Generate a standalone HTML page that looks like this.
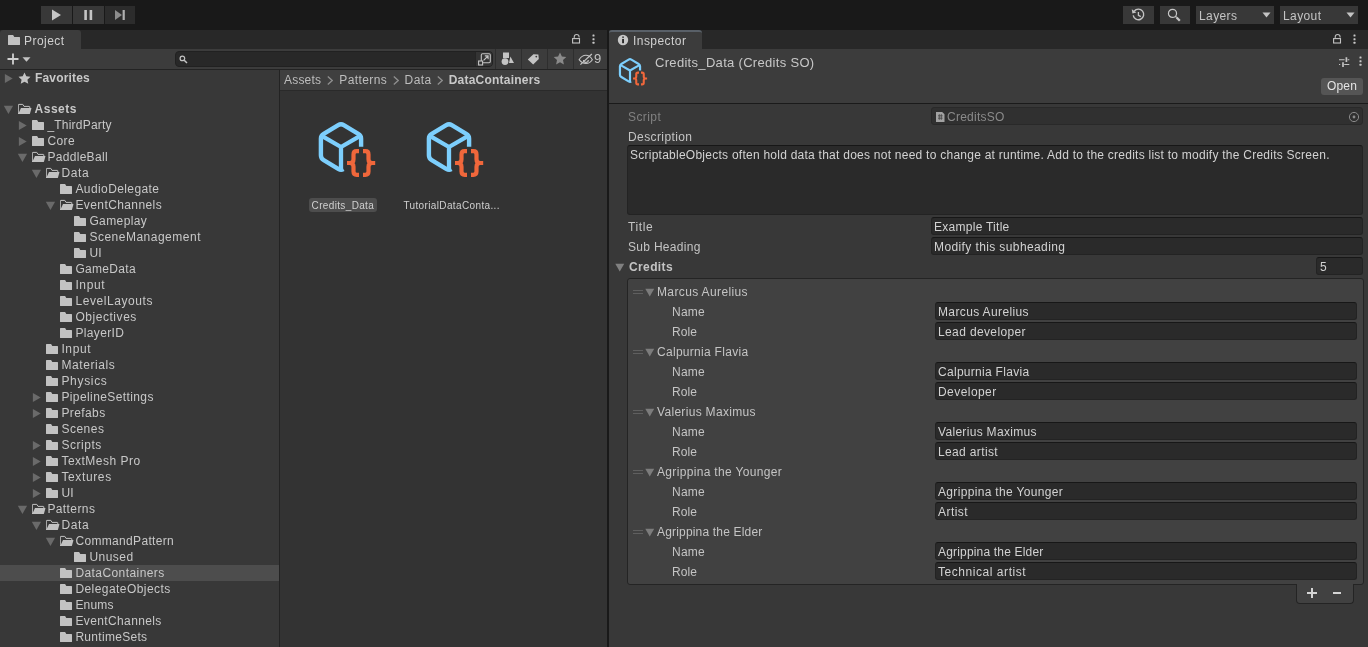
<!DOCTYPE html>
<html><head><meta charset="utf-8"><title>Unity</title>
<style>
*{box-sizing:border-box;margin:0;padding:0}
html,body{width:1368px;height:647px;overflow:hidden;background:#383838}
body{font-family:"Liberation Sans",sans-serif;font-size:12px;color:#c8c8c8;position:relative;letter-spacing:0.28px}
#wrap{position:absolute;left:0;top:0;width:1368px;height:647px;will-change:transform;transform:translateZ(0)}
.abs{position:absolute}
#top{position:absolute;left:0;top:0;width:1368px;height:30px;background:#191919}
.tb{position:absolute;top:6px;height:18px;background:#383838}
#ptabs{position:absolute;left:0;top:30px;width:607px;height:19px;background:#282828}
#itabs{position:absolute;left:609px;top:30px;width:759px;height:19px;background:#282828}
#vsplit{position:absolute;left:607px;top:30px;width:2px;height:617px;background:#191919}
.tab{position:absolute;top:0;height:19px;background:#3c3c3c;border-radius:3px 3px 0 0}
.tab span{position:absolute;top:3px;font-size:12px;color:#d0d0d0;white-space:nowrap}
#ptool{position:absolute;left:0;top:49px;width:607px;height:20px;background:#3c3c3c}
#pline{position:absolute;left:0;top:69px;width:607px;height:1px;background:#232323}
#ptree{position:absolute;left:0;top:70px;width:279px;height:577px;background:#383838;overflow:hidden}
#psplit{position:absolute;left:279px;top:70px;width:1px;height:577px;background:#232323}
#pright{position:absolute;left:280px;top:70px;width:327px;height:577px;background:#333333}
#crumb{position:absolute;left:0;top:0;width:327px;height:21px;background:#3f3f3f;border-bottom:1px solid #2a2a2a}
#crumb span{position:absolute;top:3.4px;white-space:nowrap;color:#bdbdbd}
.row{position:absolute;left:0;width:279px;height:16px}
.row.sel{background:#4d4d4d}
.row svg{position:absolute;top:0}
.tl{position:absolute;top:1px;white-space:nowrap;color:#c8c8c8;line-height:14px}
.b{font-weight:bold;letter-spacing:0.05px}
#insp{position:absolute;left:609px;top:49px;width:759px;height:598px;background:#383838}
#ihead{position:absolute;left:609px;top:49px;width:759px;height:54px;background:#3c3c3c}
#iline{position:absolute;left:609px;top:103px;width:759px;height:1px;background:#1a1a1a}
.lbl{position:absolute;white-space:nowrap;line-height:20px;color:#c4c4c4}
.fld{position:absolute;height:18px;background:#2a2a2a;border:1px solid #232323;border-top-color:#171717;border-radius:3px;margin-top:-1px}
.fld span{position:absolute;left:2px;top:2px;line-height:14px;white-space:nowrap;color:#d2d2d2}
</style></head><body><div id="wrap">
<svg width="0" height="0" style="position:absolute">
<defs>
<g id="fclosed"><path d="M0 3.6a.6.6 0 0 1 .6-.6h4.5l1.2 2h5.1a.6.6 0 0 1 .6.6v6.8a.6.6 0 0 1-.6.6h-10.8a.6.6 0 0 1-.6-.6z" fill="#c2c2c2"/></g>
<g id="fopen"><path d="M0.3 12.5V3.9a.5.5 0 0 1 .5-.5h4l1.2 2h5.3a.5.5 0 0 1 .5.5v1.4" fill="none" stroke="#c2c2c2" stroke-width="1"/><path d="M3 7.1h10.1a.3.3 0 0 1 .3.4l-1.4 4.9a.7.7 0 0 1-.7.5H-0.2v-0.8h0.9z" fill="#c2c2c2"/></g>
</defs></svg>

<!-- top toolbar -->
<div id="top">
 <div class="tb" style="left:41px;width:31px"><svg class="abs" style="left:0;top:0" width="31" height="18"><path d="M11 3.5v11l9-5.5z" fill="#c4c4c4"/></svg></div>
 <div class="tb" style="left:73px;width:31px"><svg class="abs" style="left:0;top:0" width="31" height="18"><path d="M11.3 4h2.6v10h-2.6zM16.6 4h2.6v10h-2.6z" fill="#c4c4c4"/></svg></div>
 <div class="tb" style="left:105px;width:30px;background:#2c2c2c"><svg class="abs" style="left:0;top:0" width="30" height="18"><path d="M10 4v10l7-5z" fill="#8c8c8c"/><path d="M17.6 4h2.2v10h-2.2z" fill="#b0b0b0"/></svg></div>

 <div class="tb" style="left:1123px;width:31px"><svg class="abs" style="left:8px;top:2px" width="15" height="14" viewBox="0 0 15 14"><path d="M3.2 3.2A5.3 5.3 0 1 1 2.2 7.4" fill="none" stroke="#c4c4c4" stroke-width="1.4"/><path d="M0.8 1.2l0.6 4.2 4-1z" fill="#c4c4c4"/><path d="M7.4 4v3.4l2.4 1.2" fill="none" stroke="#c4c4c4" stroke-width="1.3"/></svg></div>
 <div class="tb" style="left:1160px;width:30px"><svg class="abs" style="left:7px;top:2px" width="15" height="14" viewBox="0 0 15 14"><circle cx="5.5" cy="5.4" r="4.05" fill="none" stroke="#c8c8c8" stroke-width="1.2"/><path d="M8.4 8.3l1.2 1.2" stroke="#c8c8c8" stroke-width="1.3"/><path d="M9.6 9.5l3.2 3.2" stroke="#c8c8c8" stroke-width="2.3"/></svg></div>
 <div class="tb" style="left:1196px;width:78px"><span class="abs" style="left:3px;top:2.5px;line-height:14px;color:#c4c4c4;letter-spacing:0.4px">Layers</span><svg class="abs" style="left:66px;top:6px" width="9" height="6"><path d="M0.5 0.5h8l-4 5z" fill="#c4c4c4"/></svg></div>
 <div class="tb" style="left:1280px;width:78px"><span class="abs" style="left:3px;top:2.5px;line-height:14px;color:#c4c4c4;letter-spacing:0.4px">Layout</span><svg class="abs" style="left:66px;top:6px" width="9" height="6"><path d="M0.5 0.5h8l-4 5z" fill="#c4c4c4"/></svg></div>
</div>

<!-- project tabs -->
<div id="ptabs">
 <div class="tab" style="left:0;width:81px">
  <svg class="abs" style="left:8px;top:2px" width="15" height="16" viewBox="0 0 15 16"><path d="M0 3.6a.6.6 0 0 1 .6-.6h4.5l1.2 2h5.1a.6.6 0 0 1 .6.6v6.8a.6.6 0 0 1-.6.6h-10.8a.6.6 0 0 1-.6-.6z" fill="#c2c2c2"/></svg>
  <span style="left:24px;top:4px;line-height:14px;letter-spacing:0.45px">Project</span>
 </div>
 <!-- lock + kebab -->
 <svg class="abs" style="left:571.8px;top:3.3px" width="11" height="13" viewBox="0 0 11 13"><path d="M2.2 5.4V3.9a2.45 2.45 0 0 1 4.9 0V4.4" fill="none" stroke="#c0c0c0" stroke-width="1.05"/><rect x="0.6" y="5.6" width="6.9" height="4.4" fill="none" stroke="#c4c4c4" stroke-width="1.1"/></svg>
 <svg class="abs" style="left:592px;top:4px" width="3" height="12"><rect x="0.5" y="0.6" width="2" height="2" rx="0.5" fill="#c8c8c8"/><rect x="0.5" y="4.2" width="2" height="2" rx="0.5" fill="#c8c8c8"/><rect x="0.5" y="7.8" width="2" height="2" rx="0.5" fill="#c8c8c8"/></svg>
</div>

<!-- project toolbar -->
<div id="ptool">
 <svg class="abs" style="left:7px;top:4px" width="12" height="12"><path d="M6 0.5v11M0.5 6h11" stroke="#d0d0d0" stroke-width="1.8"/></svg>
 <svg class="abs" style="left:22px;top:8px" width="9" height="5"><path d="M0.5 0.3h8l-4 4.5z" fill="#c4c4c4"/></svg>
 <div class="abs" style="left:175px;top:2px;width:318px;height:16px;background:#282828;border:1px solid #212121;border-radius:4px;overflow:hidden"><div class="abs" style="left:299px;top:0;width:18px;height:14px;background:#343434;border-left:1px solid #252525"></div></div>
 <svg class="abs" style="left:179px;top:6px" width="9" height="9" viewBox="0 0 9 9"><circle cx="3.4" cy="3.4" r="2.3" fill="none" stroke="#c4c4c4" stroke-width="1.2"/><path d="M5.2 5.2l2.8 2.8" stroke="#c4c4c4" stroke-width="1.5"/></svg>
 <!-- open-in-new icon in search -->
 <svg class="abs" style="left:477.5px;top:3.5px" width="14" height="13" viewBox="0 0 14 13"><rect x="3.3" y="0.8" width="9" height="9" rx="1.2" fill="none" stroke="#c4c4c4" stroke-width="1.1"/><rect x="0.6" y="8" width="4" height="4" fill="#343434" stroke="#c4c4c4" stroke-width="1.1"/><path d="M5.6 7.4L10 3M6.8 2.9h3.3v3.3" fill="none" stroke="#c4c4c4" stroke-width="1.1"/></svg>
 <div class="abs" style="left:495px;top:0;width:1px;height:20px;background:#2e2e2e"></div>
 <div class="abs" style="left:521px;top:0;width:1px;height:20px;background:#2e2e2e"></div>
 <div class="abs" style="left:547px;top:0;width:1px;height:20px;background:#2e2e2e"></div>
 <div class="abs" style="left:573px;top:0;width:1px;height:20px;background:#2e2e2e"></div>
 <!-- type filter icon -->
 <svg class="abs" style="left:501px;top:3px" width="14" height="14" viewBox="0 0 14 14"><rect x="2" y="0.5" width="6" height="5.5" fill="#c4c4c4"/><circle cx="4" cy="9.6" r="3.4" fill="#c4c4c4"/><path d="M9.4 4.5l3.6 6.5h-5z" fill="#c4c4c4"/></svg>
 <!-- label icon -->
 <svg class="abs" style="left:527px;top:4px" width="13" height="12" viewBox="0 0 13 12"><path d="M0.8 6.6L6.4 1.2l5 0.2 0.4 4.6-5.6 5.4z" fill="#c4c4c4"/><circle cx="9.3" cy="3.6" r="0.9" fill="#3c3c3c"/></svg>
 <!-- star -->
 <svg class="abs" style="left:553px;top:3px" width="14" height="13" viewBox="0 0 14 13"><path d="M7 0.6l1.9 4 4.4 0.5-3.3 3 0.9 4.3L7 10.2l-3.9 2.2 0.9-4.3-3.3-3 4.4-0.5z" fill="#8a8a8a"/></svg>
 <!-- hidden eye -->
 <svg class="abs" style="left:578px;top:3.5px" width="17.5" height="13" viewBox="0 0 19 14"><path d="M1.2 7.2C3.5 3.4 6 2.4 8.6 2.4s5 1.2 7 4.8c-2 3-4.4 4.2-7 4.2S3.4 10.2 1.2 7.2z" fill="none" stroke="#c4c4c4" stroke-width="1.2"/><path d="M6 7.5a2.6 2.6 0 0 0 5.2 0" fill="none" stroke="#c4c4c4" stroke-width="1.2"/><path d="M2.6 12.6L15 1" stroke="#c4c4c4" stroke-width="1.3"/></svg>
 <span class="abs" style="left:594px;top:3px;line-height:14px;font-size:13px;color:#c4c4c4">9</span>
</div>
<div id="pline"></div>

<!-- tree -->
<div id="ptree"></div>
<div class="row" style="top:70px">
 <svg class="ar" style="left:5px;overflow:visible" width="10" height="16" viewBox="0 0 10 16"><path d="M-0.1 3.9v9.1l7.8-4.55z" fill="#6a6a6a"/></svg>
 <svg style="left:18px;top:2px" width="13" height="12" viewBox="0 0 13 12"><path d="M6.5 0.4l1.8 3.9 4.2 0.5-3.1 2.9 0.9 4.1-3.8-2.1-3.8 2.1 0.9-4.1-3.1-2.9 4.2-0.5z" fill="#c4c4c4"/></svg>
 <span class="tl b" style="letter-spacing:0.17px;left:35px">Favorites</span>
</div>
<div class="row" style="top:101px"><svg class="ar" style="left:4px;overflow:visible" width="10" height="16" viewBox="0 0 10 16"><path d="M-0.2 4.8h9.3L4.45 12.9z" fill="#6a6a6a"/></svg><svg class="fo" style="left:18px" width="15" height="16" viewBox="0 0 15 16"><path d="M0.3 12.5V3.9a.5.5 0 0 1 .5-.5h4l1.2 2h5.3a.5.5 0 0 1 .5.5v1.4" fill="none" stroke="#c2c2c2" stroke-width="1"/><path d="M3 7.1h10.1a.3.3 0 0 1 .3.4l-1.4 4.9a.7.7 0 0 1-.7.5H-0.2v-0.8h0.9z" fill="#c2c2c2"/></svg><span class="tl b" style="letter-spacing:0.49px;left:34.6px">Assets</span></div>
<div class="row" style="top:117px"><svg class="ar" style="left:19px;overflow:visible" width="10" height="16" viewBox="0 0 10 16"><path d="M-0.1 3.9v9.1l7.8-4.55z" fill="#6a6a6a"/></svg><svg class="fo" style="left:32px" width="15" height="16" viewBox="0 0 15 16"><path d="M0 3.6a.6.6 0 0 1 .6-.6h4.5l1.2 2h5.1a.6.6 0 0 1 .6.6v6.8a.6.6 0 0 1-.6.6h-10.8a.6.6 0 0 1-.6-.6z" fill="#c2c2c2"/></svg><span class="tl" style="letter-spacing:0.21px;left:47.4px">_ThirdParty</span></div>
<div class="row" style="top:133px"><svg class="ar" style="left:19px;overflow:visible" width="10" height="16" viewBox="0 0 10 16"><path d="M-0.1 3.9v9.1l7.8-4.55z" fill="#6a6a6a"/></svg><svg class="fo" style="left:32px" width="15" height="16" viewBox="0 0 15 16"><path d="M0 3.6a.6.6 0 0 1 .6-.6h4.5l1.2 2h5.1a.6.6 0 0 1 .6.6v6.8a.6.6 0 0 1-.6.6h-10.8a.6.6 0 0 1-.6-.6z" fill="#c2c2c2"/></svg><span class="tl" style="letter-spacing:0.43px;left:47.4px">Core</span></div>
<div class="row" style="top:149px"><svg class="ar" style="left:18px;overflow:visible" width="10" height="16" viewBox="0 0 10 16"><path d="M-0.2 4.8h9.3L4.45 12.9z" fill="#6a6a6a"/></svg><svg class="fo" style="left:32px" width="15" height="16" viewBox="0 0 15 16"><path d="M0.3 12.5V3.9a.5.5 0 0 1 .5-.5h4l1.2 2h5.3a.5.5 0 0 1 .5.5v1.4" fill="none" stroke="#c2c2c2" stroke-width="1"/><path d="M3 7.1h10.1a.3.3 0 0 1 .3.4l-1.4 4.9a.7.7 0 0 1-.7.5H-0.2v-0.8h0.9z" fill="#c2c2c2"/></svg><span class="tl" style="letter-spacing:0.31px;left:47.4px">PaddleBall</span></div>
<div class="row" style="top:165px"><svg class="ar" style="left:32px;overflow:visible" width="10" height="16" viewBox="0 0 10 16"><path d="M-0.2 4.8h9.3L4.45 12.9z" fill="#6a6a6a"/></svg><svg class="fo" style="left:46px" width="15" height="16" viewBox="0 0 15 16"><path d="M0.3 12.5V3.9a.5.5 0 0 1 .5-.5h4l1.2 2h5.3a.5.5 0 0 1 .5.5v1.4" fill="none" stroke="#c2c2c2" stroke-width="1"/><path d="M3 7.1h10.1a.3.3 0 0 1 .3.4l-1.4 4.9a.7.7 0 0 1-.7.5H-0.2v-0.8h0.9z" fill="#c2c2c2"/></svg><span class="tl" style="letter-spacing:0.65px;left:61.4px">Data</span></div>
<div class="row" style="top:181px"><svg class="fo" style="left:60px" width="15" height="16" viewBox="0 0 15 16"><path d="M0 3.6a.6.6 0 0 1 .6-.6h4.5l1.2 2h5.1a.6.6 0 0 1 .6.6v6.8a.6.6 0 0 1-.6.6h-10.8a.6.6 0 0 1-.6-.6z" fill="#c2c2c2"/></svg><span class="tl" style="letter-spacing:0.41px;left:75.39999999999999px">AudioDelegate</span></div>
<div class="row" style="top:197px"><svg class="ar" style="left:46px;overflow:visible" width="10" height="16" viewBox="0 0 10 16"><path d="M-0.2 4.8h9.3L4.45 12.9z" fill="#6a6a6a"/></svg><svg class="fo" style="left:60px" width="15" height="16" viewBox="0 0 15 16"><path d="M0.3 12.5V3.9a.5.5 0 0 1 .5-.5h4l1.2 2h5.3a.5.5 0 0 1 .5.5v1.4" fill="none" stroke="#c2c2c2" stroke-width="1"/><path d="M3 7.1h10.1a.3.3 0 0 1 .3.4l-1.4 4.9a.7.7 0 0 1-.7.5H-0.2v-0.8h0.9z" fill="#c2c2c2"/></svg><span class="tl" style="letter-spacing:0.41px;left:75.39999999999999px">EventChannels</span></div>
<div class="row" style="top:213px"><svg class="fo" style="left:74px" width="15" height="16" viewBox="0 0 15 16"><path d="M0 3.6a.6.6 0 0 1 .6-.6h4.5l1.2 2h5.1a.6.6 0 0 1 .6.6v6.8a.6.6 0 0 1-.6.6h-10.8a.6.6 0 0 1-.6-.6z" fill="#c2c2c2"/></svg><span class="tl" style="letter-spacing:0.39px;left:89.39999999999999px">Gameplay</span></div>
<div class="row" style="top:229px"><svg class="fo" style="left:74px" width="15" height="16" viewBox="0 0 15 16"><path d="M0 3.6a.6.6 0 0 1 .6-.6h4.5l1.2 2h5.1a.6.6 0 0 1 .6.6v6.8a.6.6 0 0 1-.6.6h-10.8a.6.6 0 0 1-.6-.6z" fill="#c2c2c2"/></svg><span class="tl" style="letter-spacing:0.5px;left:89.39999999999999px">SceneManagement</span></div>
<div class="row" style="top:245px"><svg class="fo" style="left:74px" width="15" height="16" viewBox="0 0 15 16"><path d="M0 3.6a.6.6 0 0 1 .6-.6h4.5l1.2 2h5.1a.6.6 0 0 1 .6.6v6.8a.6.6 0 0 1-.6.6h-10.8a.6.6 0 0 1-.6-.6z" fill="#c2c2c2"/></svg><span class="tl" style="letter-spacing:0.3px;left:89.39999999999999px">UI</span></div>
<div class="row" style="top:261px"><svg class="fo" style="left:60px" width="15" height="16" viewBox="0 0 15 16"><path d="M0 3.6a.6.6 0 0 1 .6-.6h4.5l1.2 2h5.1a.6.6 0 0 1 .6.6v6.8a.6.6 0 0 1-.6.6h-10.8a.6.6 0 0 1-.6-.6z" fill="#c2c2c2"/></svg><span class="tl" style="letter-spacing:0.32px;left:75.39999999999999px">GameData</span></div>
<div class="row" style="top:277px"><svg class="fo" style="left:60px" width="15" height="16" viewBox="0 0 15 16"><path d="M0 3.6a.6.6 0 0 1 .6-.6h4.5l1.2 2h5.1a.6.6 0 0 1 .6.6v6.8a.6.6 0 0 1-.6.6h-10.8a.6.6 0 0 1-.6-.6z" fill="#c2c2c2"/></svg><span class="tl" style="letter-spacing:0.62px;left:75.39999999999999px">Input</span></div>
<div class="row" style="top:293px"><svg class="fo" style="left:60px" width="15" height="16" viewBox="0 0 15 16"><path d="M0 3.6a.6.6 0 0 1 .6-.6h4.5l1.2 2h5.1a.6.6 0 0 1 .6.6v6.8a.6.6 0 0 1-.6.6h-10.8a.6.6 0 0 1-.6-.6z" fill="#c2c2c2"/></svg><span class="tl" style="letter-spacing:0.57px;left:75.39999999999999px">LevelLayouts</span></div>
<div class="row" style="top:309px"><svg class="fo" style="left:60px" width="15" height="16" viewBox="0 0 15 16"><path d="M0 3.6a.6.6 0 0 1 .6-.6h4.5l1.2 2h5.1a.6.6 0 0 1 .6.6v6.8a.6.6 0 0 1-.6.6h-10.8a.6.6 0 0 1-.6-.6z" fill="#c2c2c2"/></svg><span class="tl" style="letter-spacing:0.55px;left:75.39999999999999px">Objectives</span></div>
<div class="row" style="top:325px"><svg class="fo" style="left:60px" width="15" height="16" viewBox="0 0 15 16"><path d="M0 3.6a.6.6 0 0 1 .6-.6h4.5l1.2 2h5.1a.6.6 0 0 1 .6.6v6.8a.6.6 0 0 1-.6.6h-10.8a.6.6 0 0 1-.6-.6z" fill="#c2c2c2"/></svg><span class="tl" style="letter-spacing:0.35px;left:75.39999999999999px">PlayerID</span></div>
<div class="row" style="top:341px"><svg class="fo" style="left:46px" width="15" height="16" viewBox="0 0 15 16"><path d="M0 3.6a.6.6 0 0 1 .6-.6h4.5l1.2 2h5.1a.6.6 0 0 1 .6.6v6.8a.6.6 0 0 1-.6.6h-10.8a.6.6 0 0 1-.6-.6z" fill="#c2c2c2"/></svg><span class="tl" style="letter-spacing:0.62px;left:61.4px">Input</span></div>
<div class="row" style="top:357px"><svg class="fo" style="left:46px" width="15" height="16" viewBox="0 0 15 16"><path d="M0 3.6a.6.6 0 0 1 .6-.6h4.5l1.2 2h5.1a.6.6 0 0 1 .6.6v6.8a.6.6 0 0 1-.6.6h-10.8a.6.6 0 0 1-.6-.6z" fill="#c2c2c2"/></svg><span class="tl" style="letter-spacing:0.58px;left:61.4px">Materials</span></div>
<div class="row" style="top:373px"><svg class="fo" style="left:46px" width="15" height="16" viewBox="0 0 15 16"><path d="M0 3.6a.6.6 0 0 1 .6-.6h4.5l1.2 2h5.1a.6.6 0 0 1 .6.6v6.8a.6.6 0 0 1-.6.6h-10.8a.6.6 0 0 1-.6-.6z" fill="#c2c2c2"/></svg><span class="tl" style="letter-spacing:0.69px;left:61.4px">Physics</span></div>
<div class="row" style="top:389px"><svg class="ar" style="left:33px;overflow:visible" width="10" height="16" viewBox="0 0 10 16"><path d="M-0.1 3.9v9.1l7.8-4.55z" fill="#6a6a6a"/></svg><svg class="fo" style="left:46px" width="15" height="16" viewBox="0 0 15 16"><path d="M0 3.6a.6.6 0 0 1 .6-.6h4.5l1.2 2h5.1a.6.6 0 0 1 .6.6v6.8a.6.6 0 0 1-.6.6h-10.8a.6.6 0 0 1-.6-.6z" fill="#c2c2c2"/></svg><span class="tl" style="letter-spacing:0.4px;left:61.4px">PipelineSettings</span></div>
<div class="row" style="top:405px"><svg class="ar" style="left:33px;overflow:visible" width="10" height="16" viewBox="0 0 10 16"><path d="M-0.1 3.9v9.1l7.8-4.55z" fill="#6a6a6a"/></svg><svg class="fo" style="left:46px" width="15" height="16" viewBox="0 0 15 16"><path d="M0 3.6a.6.6 0 0 1 .6-.6h4.5l1.2 2h5.1a.6.6 0 0 1 .6.6v6.8a.6.6 0 0 1-.6.6h-10.8a.6.6 0 0 1-.6-.6z" fill="#c2c2c2"/></svg><span class="tl" style="letter-spacing:0.41px;left:61.4px">Prefabs</span></div>
<div class="row" style="top:421px"><svg class="fo" style="left:46px" width="15" height="16" viewBox="0 0 15 16"><path d="M0 3.6a.6.6 0 0 1 .6-.6h4.5l1.2 2h5.1a.6.6 0 0 1 .6.6v6.8a.6.6 0 0 1-.6.6h-10.8a.6.6 0 0 1-.6-.6z" fill="#c2c2c2"/></svg><span class="tl" style="letter-spacing:0.51px;left:61.4px">Scenes</span></div>
<div class="row" style="top:437px"><svg class="ar" style="left:33px;overflow:visible" width="10" height="16" viewBox="0 0 10 16"><path d="M-0.1 3.9v9.1l7.8-4.55z" fill="#6a6a6a"/></svg><svg class="fo" style="left:46px" width="15" height="16" viewBox="0 0 15 16"><path d="M0 3.6a.6.6 0 0 1 .6-.6h4.5l1.2 2h5.1a.6.6 0 0 1 .6.6v6.8a.6.6 0 0 1-.6.6h-10.8a.6.6 0 0 1-.6-.6z" fill="#c2c2c2"/></svg><span class="tl" style="letter-spacing:0.54px;left:61.4px">Scripts</span></div>
<div class="row" style="top:453px"><svg class="ar" style="left:33px;overflow:visible" width="10" height="16" viewBox="0 0 10 16"><path d="M-0.1 3.9v9.1l7.8-4.55z" fill="#6a6a6a"/></svg><svg class="fo" style="left:46px" width="15" height="16" viewBox="0 0 15 16"><path d="M0 3.6a.6.6 0 0 1 .6-.6h4.5l1.2 2h5.1a.6.6 0 0 1 .6.6v6.8a.6.6 0 0 1-.6.6h-10.8a.6.6 0 0 1-.6-.6z" fill="#c2c2c2"/></svg><span class="tl" style="letter-spacing:0.49px;left:61.4px">TextMesh Pro</span></div>
<div class="row" style="top:469px"><svg class="ar" style="left:33px;overflow:visible" width="10" height="16" viewBox="0 0 10 16"><path d="M-0.1 3.9v9.1l7.8-4.55z" fill="#6a6a6a"/></svg><svg class="fo" style="left:46px" width="15" height="16" viewBox="0 0 15 16"><path d="M0 3.6a.6.6 0 0 1 .6-.6h4.5l1.2 2h5.1a.6.6 0 0 1 .6.6v6.8a.6.6 0 0 1-.6.6h-10.8a.6.6 0 0 1-.6-.6z" fill="#c2c2c2"/></svg><span class="tl" style="letter-spacing:0.63px;left:61.4px">Textures</span></div>
<div class="row" style="top:485px"><svg class="ar" style="left:33px;overflow:visible" width="10" height="16" viewBox="0 0 10 16"><path d="M-0.1 3.9v9.1l7.8-4.55z" fill="#6a6a6a"/></svg><svg class="fo" style="left:46px" width="15" height="16" viewBox="0 0 15 16"><path d="M0 3.6a.6.6 0 0 1 .6-.6h4.5l1.2 2h5.1a.6.6 0 0 1 .6.6v6.8a.6.6 0 0 1-.6.6h-10.8a.6.6 0 0 1-.6-.6z" fill="#c2c2c2"/></svg><span class="tl" style="letter-spacing:0.3px;left:61.4px">UI</span></div>
<div class="row" style="top:501px"><svg class="ar" style="left:18px;overflow:visible" width="10" height="16" viewBox="0 0 10 16"><path d="M-0.2 4.8h9.3L4.45 12.9z" fill="#6a6a6a"/></svg><svg class="fo" style="left:32px" width="15" height="16" viewBox="0 0 15 16"><path d="M0.3 12.5V3.9a.5.5 0 0 1 .5-.5h4l1.2 2h5.3a.5.5 0 0 1 .5.5v1.4" fill="none" stroke="#c2c2c2" stroke-width="1"/><path d="M3 7.1h10.1a.3.3 0 0 1 .3.4l-1.4 4.9a.7.7 0 0 1-.7.5H-0.2v-0.8h0.9z" fill="#c2c2c2"/></svg><span class="tl" style="letter-spacing:0.4px;left:47.4px">Patterns</span></div>
<div class="row" style="top:517px"><svg class="ar" style="left:32px;overflow:visible" width="10" height="16" viewBox="0 0 10 16"><path d="M-0.2 4.8h9.3L4.45 12.9z" fill="#6a6a6a"/></svg><svg class="fo" style="left:46px" width="15" height="16" viewBox="0 0 15 16"><path d="M0.3 12.5V3.9a.5.5 0 0 1 .5-.5h4l1.2 2h5.3a.5.5 0 0 1 .5.5v1.4" fill="none" stroke="#c2c2c2" stroke-width="1"/><path d="M3 7.1h10.1a.3.3 0 0 1 .3.4l-1.4 4.9a.7.7 0 0 1-.7.5H-0.2v-0.8h0.9z" fill="#c2c2c2"/></svg><span class="tl" style="letter-spacing:0.65px;left:61.4px">Data</span></div>
<div class="row" style="top:533px"><svg class="ar" style="left:46px;overflow:visible" width="10" height="16" viewBox="0 0 10 16"><path d="M-0.2 4.8h9.3L4.45 12.9z" fill="#6a6a6a"/></svg><svg class="fo" style="left:60px" width="15" height="16" viewBox="0 0 15 16"><path d="M0.3 12.5V3.9a.5.5 0 0 1 .5-.5h4l1.2 2h5.3a.5.5 0 0 1 .5.5v1.4" fill="none" stroke="#c2c2c2" stroke-width="1"/><path d="M3 7.1h10.1a.3.3 0 0 1 .3.4l-1.4 4.9a.7.7 0 0 1-.7.5H-0.2v-0.8h0.9z" fill="#c2c2c2"/></svg><span class="tl" style="letter-spacing:0.33px;left:75.39999999999999px">CommandPattern</span></div>
<div class="row" style="top:549px"><svg class="fo" style="left:74px" width="15" height="16" viewBox="0 0 15 16"><path d="M0 3.6a.6.6 0 0 1 .6-.6h4.5l1.2 2h5.1a.6.6 0 0 1 .6.6v6.8a.6.6 0 0 1-.6.6h-10.8a.6.6 0 0 1-.6-.6z" fill="#c2c2c2"/></svg><span class="tl" style="letter-spacing:0.47px;left:89.39999999999999px">Unused</span></div>
<div class="row sel" style="top:565px"><svg class="fo" style="left:60px" width="15" height="16" viewBox="0 0 15 16"><path d="M0 3.6a.6.6 0 0 1 .6-.6h4.5l1.2 2h5.1a.6.6 0 0 1 .6.6v6.8a.6.6 0 0 1-.6.6h-10.8a.6.6 0 0 1-.6-.6z" fill="#c2c2c2"/></svg><span class="tl" style="letter-spacing:0.42px;left:75.39999999999999px">DataContainers</span></div>
<div class="row" style="top:581px"><svg class="fo" style="left:60px" width="15" height="16" viewBox="0 0 15 16"><path d="M0 3.6a.6.6 0 0 1 .6-.6h4.5l1.2 2h5.1a.6.6 0 0 1 .6.6v6.8a.6.6 0 0 1-.6.6h-10.8a.6.6 0 0 1-.6-.6z" fill="#c2c2c2"/></svg><span class="tl" style="letter-spacing:0.44px;left:75.39999999999999px">DelegateObjects</span></div>
<div class="row" style="top:597px"><svg class="fo" style="left:60px" width="15" height="16" viewBox="0 0 15 16"><path d="M0 3.6a.6.6 0 0 1 .6-.6h4.5l1.2 2h5.1a.6.6 0 0 1 .6.6v6.8a.6.6 0 0 1-.6.6h-10.8a.6.6 0 0 1-.6-.6z" fill="#c2c2c2"/></svg><span class="tl" style="letter-spacing:0.19px;left:75.39999999999999px">Enums</span></div>
<div class="row" style="top:613px"><svg class="fo" style="left:60px" width="15" height="16" viewBox="0 0 15 16"><path d="M0 3.6a.6.6 0 0 1 .6-.6h4.5l1.2 2h5.1a.6.6 0 0 1 .6.6v6.8a.6.6 0 0 1-.6.6h-10.8a.6.6 0 0 1-.6-.6z" fill="#c2c2c2"/></svg><span class="tl" style="letter-spacing:0.38px;left:75.39999999999999px">EventChannels</span></div>
<div class="row" style="top:629px"><svg class="fo" style="left:60px" width="15" height="16" viewBox="0 0 15 16"><path d="M0 3.6a.6.6 0 0 1 .6-.6h4.5l1.2 2h5.1a.6.6 0 0 1 .6.6v6.8a.6.6 0 0 1-.6.6h-10.8a.6.6 0 0 1-.6-.6z" fill="#c2c2c2"/></svg><span class="tl" style="letter-spacing:0.3px;left:75.39999999999999px">RuntimeSets</span></div>
<div id="psplit"></div>

<!-- right project pane -->
<div id="pright">
 <div id="crumb">
  <span style="letter-spacing:0.2px;left:4px">Assets</span>
  <svg class="abs" style="left:47px;top:6px" width="6" height="9"><path d="M0.8 0.6l4.4 3.9-4.4 3.9" fill="none" stroke="#8e8e8e" stroke-width="1.35"/></svg>
  <span style="letter-spacing:0.4px;left:59.3px">Patterns</span>
  <svg class="abs" style="left:112.5px;top:6px" width="6" height="9"><path d="M0.8 0.6l4.4 3.9-4.4 3.9" fill="none" stroke="#8e8e8e" stroke-width="1.35"/></svg>
  <span style="letter-spacing:0.48px;left:124.5px">Data</span>
  <svg class="abs" style="left:157px;top:6px" width="6" height="9"><path d="M0.8 0.6l4.4 3.9-4.4 3.9" fill="none" stroke="#8e8e8e" stroke-width="1.35"/></svg>
  <span style="letter-spacing:0.22px;left:168.7px;font-weight:bold;color:#c8c8c8">DataContainers</span>
 </div>
 <!-- icons -->
 <svg class="abs" style="left:31px;top:46px;overflow:visible" width="64" height="64" viewBox="0 0 64 64"><path d="M50.1 30.8V22.7Q50.1 19.5 47.3 17.9L32.8 9.2Q30 7.5 27.2 9.2L12.7 17.9Q9.9 19.5 9.9 22.7V39.3Q9.9 42.5 12.7 44.1L27.2 52.8Q30 54.5 32.4 53.1" fill="none" stroke="#7dcffd" stroke-width="4.4" stroke-linejoin="round" stroke-linecap="butt"/>
 <path d="M11.2 20.2L30 31L48.8 20.2M30 31V53.5" fill="none" stroke="#7dcffd" stroke-width="4.3" stroke-linejoin="round" stroke-linecap="butt"/>
 <path d="M48 35.2h-2.3q-3.2 0-3.2 3.2v4.8q0 3.8-3.6 3.8h-2.9M36 47h2.9q3.6 0 3.6 3.8v4.8q0 3.2 3.2 3.2h2.3" fill="none" stroke="#f0673b" stroke-width="4.2"/>
 <path d="M52 35.2h2.3q3.2 0 3.2 3.2v4.8q0 3.8 3.6 3.8h3.1M64.2 47h-3.1q-3.6 0-3.6 3.8v4.8q0 3.2-3.2 3.2h-2.3" fill="none" stroke="#f0673b" stroke-width="4.2"/></svg>
 <svg class="abs" style="left:139px;top:46px;overflow:visible" width="64" height="64" viewBox="0 0 64 64"><path d="M50.1 30.8V22.7Q50.1 19.5 47.3 17.9L32.8 9.2Q30 7.5 27.2 9.2L12.7 17.9Q9.9 19.5 9.9 22.7V39.3Q9.9 42.5 12.7 44.1L27.2 52.8Q30 54.5 32.4 53.1" fill="none" stroke="#7dcffd" stroke-width="4.4" stroke-linejoin="round" stroke-linecap="butt"/>
 <path d="M11.2 20.2L30 31L48.8 20.2M30 31V53.5" fill="none" stroke="#7dcffd" stroke-width="4.3" stroke-linejoin="round" stroke-linecap="butt"/>
 <path d="M48 35.2h-2.3q-3.2 0-3.2 3.2v4.8q0 3.8-3.6 3.8h-2.9M36 47h2.9q3.6 0 3.6 3.8v4.8q0 3.2 3.2 3.2h2.3" fill="none" stroke="#f0673b" stroke-width="4.2"/>
 <path d="M52 35.2h2.3q3.2 0 3.2 3.2v4.8q0 3.8 3.6 3.8h3.1M64.2 47h-3.1q-3.6 0-3.6 3.8v4.8q0 3.2-3.2 3.2h-2.3" fill="none" stroke="#f0673b" stroke-width="4.2"/></svg>
 <div class="abs" style="left:29px;top:128px;width:68px;height:14px;background:#4d4d4d;border-radius:3px"></div>
 <span class="abs" style="letter-spacing:0.35px;left:31.6px;top:128px;font-size:10px;line-height:15px;color:#d0d0d0;white-space:nowrap">Credits_Data</span>
 <span class="abs" style="letter-spacing:0.37px;left:123.4px;top:128px;font-size:10px;line-height:15px;color:#d0d0d0;white-space:nowrap">TutorialDataConta...</span>
</div>

<svg width="0" height="0" style="position:absolute"><defs>
<g id="soicon">
 <path d="M50.1 30.8V22.7Q50.1 19.5 47.3 17.9L32.8 9.2Q30 7.5 27.2 9.2L12.7 17.9Q9.9 19.5 9.9 22.7V39.3Q9.9 42.5 12.7 44.1L27.2 52.8Q30 54.5 32.4 53.1" fill="none" stroke="#7dcffd" stroke-width="4.4" stroke-linejoin="round" stroke-linecap="butt"/>
 <path d="M11.2 20.2L30 31L48.8 20.2M30 31V53.5" fill="none" stroke="#7dcffd" stroke-width="4.3" stroke-linejoin="round" stroke-linecap="butt"/>
 <path d="M48 35.2h-2.3q-3.2 0-3.2 3.2v4.8q0 3.8-3.6 3.8h-2.9M36 47h2.9q3.6 0 3.6 3.8v4.8q0 3.2 3.2 3.2h2.3" fill="none" stroke="#f0673b" stroke-width="4.2"/>
 <path d="M52 35.2h2.3q3.2 0 3.2 3.2v4.8q0 3.8 3.6 3.8h3.1M64.2 47h-3.1q-3.6 0-3.6 3.8v4.8q0 3.2-3.2 3.2h-2.3" fill="none" stroke="#f0673b" stroke-width="4.2"/>
</g></defs></svg>

<div id="vsplit"></div>

<!-- inspector -->
<div id="itabs">
 <div class="tab" style="left:0;width:93px;border-top:2px solid #596068">
  <svg class="abs" style="left:8px;top:2px" width="12" height="12" viewBox="0 0 12 12"><circle cx="6" cy="6" r="5.2" fill="#c8c8c8"/><rect x="5.1" y="5" width="1.9" height="4.2" fill="#2a2a2a"/><rect x="5.1" y="2.4" width="1.9" height="1.7" fill="#555"/></svg>
  <span style="left:24px;top:2px;line-height:14px;letter-spacing:0.45px">Inspector</span>
 </div>
 <svg class="abs" style="left:723.6px;top:3.3px" width="11" height="13" viewBox="0 0 11 13"><path d="M2.2 5.4V3.9a2.45 2.45 0 0 1 4.9 0V4.4" fill="none" stroke="#c0c0c0" stroke-width="1.05"/><rect x="0.6" y="5.6" width="6.9" height="4.4" fill="none" stroke="#c4c4c4" stroke-width="1.1"/></svg>
 <svg class="abs" style="left:743.5px;top:4px" width="3" height="12"><rect x="0.5" y="0.6" width="2" height="2" rx="0.5" fill="#c8c8c8"/><rect x="0.5" y="4.2" width="2" height="2" rx="0.5" fill="#c8c8c8"/><rect x="0.5" y="7.8" width="2" height="2" rx="0.5" fill="#c8c8c8"/></svg>
</div>
<div id="insp"></div>
<div id="ihead"></div>
<svg class="abs" style="left:615px;top:54.5px;overflow:visible" width="32" height="32" viewBox="0 0 64 64"><path d="M50.1 30.8V22.7Q50.1 19.5 47.3 17.9L32.8 9.2Q30 7.5 27.2 9.2L12.7 17.9Q9.9 19.5 9.9 22.7V39.3Q9.9 42.5 12.7 44.1L27.2 52.8Q30 54.5 32.4 53.1" fill="none" stroke="#7dcffd" stroke-width="4.4" stroke-linejoin="round" stroke-linecap="butt"/>
 <path d="M11.2 20.2L30 31L48.8 20.2M30 31V53.5" fill="none" stroke="#7dcffd" stroke-width="4.3" stroke-linejoin="round" stroke-linecap="butt"/>
 <path d="M48 35.2h-2.3q-3.2 0-3.2 3.2v4.8q0 3.8-3.6 3.8h-2.9M36 47h2.9q3.6 0 3.6 3.8v4.8q0 3.2 3.2 3.2h2.3" fill="none" stroke="#f0673b" stroke-width="4.2"/>
 <path d="M52 35.2h2.3q3.2 0 3.2 3.2v4.8q0 3.8 3.6 3.8h3.1M64.2 47h-3.1q-3.6 0-3.6 3.8v4.8q0 3.2-3.2 3.2h-2.3" fill="none" stroke="#f0673b" stroke-width="4.2"/></svg>
<span class="abs" style="letter-spacing:0.31px;left:655px;top:54.7px;font-size:13px;line-height:16px;color:#c8c8c8;white-space:nowrap">Credits_Data (Credits SO)</span>
<!-- preset + kebab -->
<svg class="abs" style="left:1339px;top:57px" width="11" height="11" viewBox="0 0 11 11"><path d="M0 2.7h5.6M8.6 2.7h1.7M0 7.5h1.2M5.2 7.5h5.1" stroke="#c4c4c4" stroke-width="1.1"/><path d="M7.4 0.2v4.8M4 5.3v4.8" stroke="#c4c4c4" stroke-width="1.7"/></svg>
<svg class="abs" style="left:1358.5px;top:56.4px" width="3" height="12"><rect x="0.5" y="0.6" width="2" height="2" rx="0.5" fill="#c8c8c8"/><rect x="0.5" y="4.2" width="2" height="2" rx="0.5" fill="#c8c8c8"/><rect x="0.5" y="7.8" width="2" height="2" rx="0.5" fill="#c8c8c8"/></svg>
<div class="abs" style="left:1321px;top:78px;width:42px;height:16.5px;background:#555555;border-radius:3px"><span class="abs" style="left:0;top:0.5px;width:42px;text-align:center;line-height:15px;color:#e4e4e4;letter-spacing:0.2px">Open</span></div>
<div id="iline"></div>

<!-- fields -->
<span class="lbl" style="letter-spacing:0.42px;left:628px;top:107px;color:#808080">Script</span>
<div class="fld" style="left:931px;top:108px;width:432px;background:#303030;border-color:#292929"><svg class="abs" style="left:4px;top:4px" width="9" height="10" viewBox="0 0 9 10"><path d="M0 0h6.2l2.3 2.3v7.7h-8.5z" fill="#a2a2a2"/><path d="M2 3.8h4.6M2 6.2h4.6M3.3 2.2v5.6M5.3 2.2v5.6" stroke="#4a4a4a" stroke-width="0.9"/></svg><span style="letter-spacing:0.24px;left:15px;color:#8a8a8a">CreditsSO</span>
<svg class="abs" style="left:416px;top:2.5px" width="12" height="12"><circle cx="6" cy="6" r="4.6" fill="none" stroke="#8a8a8a" stroke-width="1"/><circle cx="6" cy="6" r="1.4" fill="#8a8a8a"/></svg></div>
<span class="lbl" style="letter-spacing:0.4px;left:628px;top:127px">Description</span>
<div class="fld" style="left:627px;top:146px;width:736px;height:70px"><span style="letter-spacing:0.25px;top:2px">ScriptableObjects often hold data that does not need to change at runtime. Add to the credits list to modify the Credits Screen.</span></div>
<span class="lbl" style="letter-spacing:0.64px;left:628px;top:217px">Title</span>
<div class="fld" style="left:931px;top:218px;width:432px"><span style="letter-spacing:0.27px;">Example Title</span></div>
<span class="lbl" style="letter-spacing:0.3px;left:628px;top:237px">Sub Heading</span>
<div class="fld" style="left:931px;top:238px;width:432px"><span style="letter-spacing:0.39px;">Modify this subheading</span></div>
<svg class="abs" style="left:614.5px;top:259px" width="10" height="16" viewBox="0 0 10 16"><path d="M0.3 4.8h8.9L4.75 12.6z" fill="#808080"/></svg>
<span class="lbl b" style="letter-spacing:0.38px;left:629px;top:257px">Credits</span>
<div class="fld" style="left:1316px;top:258px;width:47px"><span style="left:3px">5</span></div>
<!-- list box -->
<div class="abs" style="left:627px;top:278px;width:736.5px;height:307px;background:#414141;border:1px solid #242424;border-radius:3px"></div>
<svg class="abs" style="left:633px;top:289px" width="11" height="6" viewBox="0 0 11 6"><path d="M0 1.5h10M0 4.5h10" stroke="#5f5f5f" stroke-width="1"/></svg>
<svg class="abs" style="left:645px;top:284px" width="10" height="16" viewBox="0 0 10 16"><path d="M0.3 4.8h8.9L4.75 12.6z" fill="#7c7c7c"/></svg>
<span class="lbl" style="letter-spacing:0.37px;left:657px;top:282px">Marcus Aurelius</span>
<span class="lbl" style="letter-spacing:0.26px;left:672px;top:302px">Name</span>
<div class="fld" style="left:935px;top:303px;width:422px"><span style="letter-spacing:0.37px;">Marcus Aurelius</span></div>
<span class="lbl" style="letter-spacing:0.04px;left:672px;top:322px">Role</span>
<div class="fld" style="left:935px;top:323px;width:422px"><span style="letter-spacing:0.37px;">Lead developer</span></div>
<svg class="abs" style="left:633px;top:349px" width="11" height="6" viewBox="0 0 11 6"><path d="M0 1.5h10M0 4.5h10" stroke="#5f5f5f" stroke-width="1"/></svg>
<svg class="abs" style="left:645px;top:344px" width="10" height="16" viewBox="0 0 10 16"><path d="M0.3 4.8h8.9L4.75 12.6z" fill="#7c7c7c"/></svg>
<span class="lbl" style="letter-spacing:0.29px;left:657px;top:342px">Calpurnia Flavia</span>
<span class="lbl" style="letter-spacing:0.26px;left:672px;top:362px">Name</span>
<div class="fld" style="left:935px;top:363px;width:422px"><span style="letter-spacing:0.29px;">Calpurnia Flavia</span></div>
<span class="lbl" style="letter-spacing:0.04px;left:672px;top:382px">Role</span>
<div class="fld" style="left:935px;top:383px;width:422px"><span style="letter-spacing:0.44px;">Developer</span></div>
<svg class="abs" style="left:633px;top:409px" width="11" height="6" viewBox="0 0 11 6"><path d="M0 1.5h10M0 4.5h10" stroke="#5f5f5f" stroke-width="1"/></svg>
<svg class="abs" style="left:645px;top:404px" width="10" height="16" viewBox="0 0 10 16"><path d="M0.3 4.8h8.9L4.75 12.6z" fill="#7c7c7c"/></svg>
<span class="lbl" style="letter-spacing:0.31px;left:657px;top:402px">Valerius Maximus</span>
<span class="lbl" style="letter-spacing:0.26px;left:672px;top:422px">Name</span>
<div class="fld" style="left:935px;top:423px;width:422px"><span style="letter-spacing:0.31px;">Valerius Maximus</span></div>
<span class="lbl" style="letter-spacing:0.04px;left:672px;top:442px">Role</span>
<div class="fld" style="left:935px;top:443px;width:422px"><span style="letter-spacing:0.36px;">Lead artist</span></div>
<svg class="abs" style="left:633px;top:469px" width="11" height="6" viewBox="0 0 11 6"><path d="M0 1.5h10M0 4.5h10" stroke="#5f5f5f" stroke-width="1"/></svg>
<svg class="abs" style="left:645px;top:464px" width="10" height="16" viewBox="0 0 10 16"><path d="M0.3 4.8h8.9L4.75 12.6z" fill="#7c7c7c"/></svg>
<span class="lbl" style="letter-spacing:0.33px;left:657px;top:462px">Agrippina the Younger</span>
<span class="lbl" style="letter-spacing:0.26px;left:672px;top:482px">Name</span>
<div class="fld" style="left:935px;top:483px;width:422px"><span style="letter-spacing:0.33px;">Agrippina the Younger</span></div>
<span class="lbl" style="letter-spacing:0.04px;left:672px;top:502px">Role</span>
<div class="fld" style="left:935px;top:503px;width:422px"><span style="letter-spacing:0.45px;">Artist</span></div>
<svg class="abs" style="left:633px;top:529px" width="11" height="6" viewBox="0 0 11 6"><path d="M0 1.5h10M0 4.5h10" stroke="#5f5f5f" stroke-width="1"/></svg>
<svg class="abs" style="left:645px;top:524px" width="10" height="16" viewBox="0 0 10 16"><path d="M0.3 4.8h8.9L4.75 12.6z" fill="#7c7c7c"/></svg>
<span class="lbl" style="letter-spacing:0.18px;left:657px;top:522px">Agrippina the Elder</span>
<span class="lbl" style="letter-spacing:0.26px;left:672px;top:542px">Name</span>
<div class="fld" style="left:935px;top:543px;width:422px"><span style="letter-spacing:0.18px;">Agrippina the Elder</span></div>
<span class="lbl" style="letter-spacing:0.04px;left:672px;top:562px">Role</span>
<div class="fld" style="left:935px;top:563px;width:422px"><span style="letter-spacing:0.55px;">Technical artist</span></div>
<div class="abs" style="left:1296px;top:584px;width:58px;height:20px;background:#414141;border:1px solid #242424;border-top:none;border-radius:0 0 4px 4px"></div>
<svg class="abs" style="left:1307px;top:588px" width="10" height="10"><path d="M5 0v10M0 5h10" stroke="#d4d4d4" stroke-width="2"/></svg>
<svg class="abs" style="left:1333px;top:592px" width="8" height="2"><path d="M0 1h8" stroke="#d4d4d4" stroke-width="2"/></svg>
</div></body></html>
